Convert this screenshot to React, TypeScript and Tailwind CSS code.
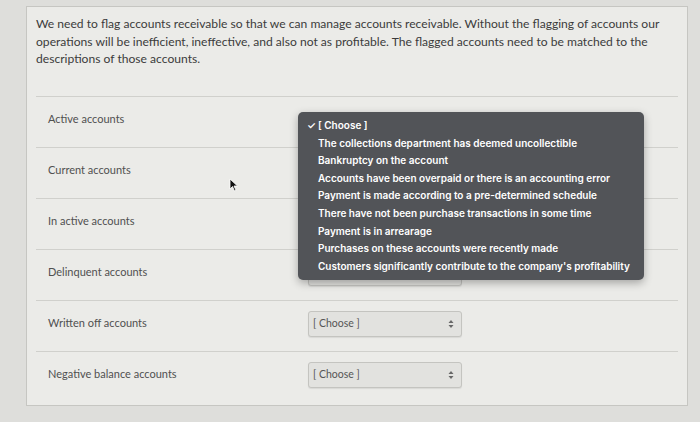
import React from 'react';

const rows = [
  'Active accounts',
  'Current accounts',
  'In active accounts',
  'Delinquent accounts',
  'Written off accounts',
  'Negative balance accounts',
];

const options = [
  'The collections department has deemed uncollectible',
  'Bankruptcy on the account',
  'Accounts have been overpaid or there is an accounting error',
  'Payment is made according to a pre-determined schedule',
  'There have not been purchase transactions in some time',
  'Payment is in arrearage',
  'Purchases on these accounts were recently made',
  "Customers significantly contribute to the company's profitability",
];

function SelectBox({ hidden }: { hidden?: boolean }) {
  return (
    <div
      className={
        hidden
          ? 'invisible h-[26px] w-[154px]'
          : 'flex h-[26px] w-[154px] items-center justify-between rounded-[3px] border border-[#c4c4c0] bg-[#e2e2df] pl-[4px] pr-[7px] shadow-[0_1px_1px_rgba(0,0,0,0.08)]'
      }
    >
      <span className="text-[10.5px] text-[#555]">[ Choose ]</span>
      <svg width="6" height="10" viewBox="0 0 6 10" className="text-[#666]">
        <path d="M0.5 4 L3 1 L5.5 4 Z" fill="currentColor" />
        <path d="M0.5 6 L3 9 L5.5 6 Z" fill="currentColor" />
      </svg>
    </div>
  );
}

export default function App() {
  return (
    <div className="h-[422px] w-[700px] overflow-hidden bg-[#dededb] pt-[6px] font-['Lato','Liberation_Sans',sans-serif]">
      <div className="relative ml-[26px] h-[400px] w-[662px] border border-[#c6c6c2] bg-[#ebebe8] px-[9px]">
        <p className="pt-[8px] text-[12.1px] leading-[17.5px] text-[#3b3b3b]">
          We need to flag accounts receivable so that we can manage accounts receivable. Without the flagging of accounts our operations will be inefficient, ineffective, and also not as profitable. The flagged accounts need to be matched to the descriptions of those accounts.
        </p>

        <div className="mt-[28px] border-t border-[#d0d0cc]">
          {rows.map((label, i) => (
            <div
              key={label}
              className="flex h-[51px] items-start border-b border-[#d0d0cc] pt-[10px] last:border-b-0"
            >
              <div className="w-[272px] pl-[12px] pt-[4px] text-[11px] text-[#505050]">{label}</div>
              <SelectBox hidden={i < 3} />
            </div>
          ))}
        </div>

        {/* open popup menu */}
        <div className="absolute left-[271px] top-[105px] w-[346px] rounded-[5px] bg-[#525458] py-[5px] shadow-[0_3px_8px_rgba(0,0,0,0.3)] font-['Inter','Open_Sans',sans-serif] text-[10px] font-semibold leading-[17.6px] text-white">
          <div className="flex items-center pl-[9px]">
            <span className="w-[11px] text-[10px]">✓</span>
            <span>[ Choose ]</span>
          </div>
          {options.map((o) => (
            <div key={o} className="pl-[20px] whitespace-nowrap">
              {o}
            </div>
          ))}
        </div>

        {/* mouse cursor */}
        <svg
          className="absolute left-[202px] top-[171px]"
          width="10"
          height="14"
          viewBox="0 0 10 14"
        >
          <path d="M1 1 L1 11 L3.5 8.5 L5.5 13 L7 12.3 L5 8 L8.5 8 Z" fill="#111" stroke="#fff" strokeWidth="0.8" />
        </svg>
      </div>
    </div>
  );
}
